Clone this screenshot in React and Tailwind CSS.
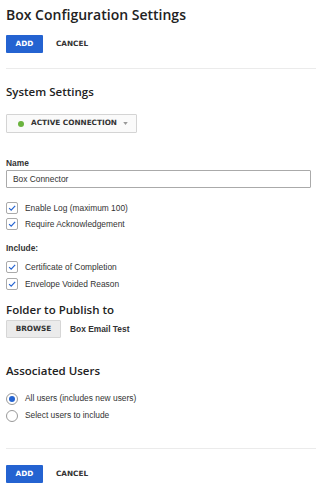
const heading = "font-['Open_Sans',sans-serif] font-semibold text-[#222]";
const body = "font-['Liberation_Sans',Arial,sans-serif] text-[#333]";
const caps = "font-['DejaVu_Sans',sans-serif] text-[7.3px] font-bold whitespace-nowrap";

function Check({ label }) {
  return (
    <label className={`flex h-[16px] items-center gap-[7px] text-[8.4px] ${body}`}>
      <span className="flex h-[12px] w-[12px] items-center justify-center rounded-[2px] border border-[#aaa] bg-white">
        <svg viewBox="0 0 12 12" className="h-[10px] w-[10px]">
          <path d="M2.5 6.2 L5 8.6 L9.8 3.4" fill="none" stroke="#2463d1" strokeWidth="1.4" />
        </svg>
      </span>
      {label}
    </label>
  );
}

function Radio({ label, checked }) {
  return (
    <label className={`flex h-[17px] items-center gap-[7px] text-[8.4px] ${body}`}>
      <span className="flex h-[12px] w-[12px] items-center justify-center rounded-full border border-[#999] bg-white">
        {checked && <span className="h-[6px] w-[6px] rounded-full bg-[#2463d1]" />}
      </span>
      {label}
    </label>
  );
}

function Actions() {
  return (
    <div className={`flex items-center gap-[13px] ${caps}`}>
      <button className="h-[18px] w-[37px] rounded-[1px] bg-[#2463d1] text-white">ADD</button>
      <button className="text-[#333]">CANCEL</button>
    </div>
  );
}

export default function App() {
  return (
    <div className="h-[492px] w-[316px] bg-white pl-[6px]">
      <h1 className={`pt-[5px] text-[14px] leading-[20px] ${heading}`}>Box Configuration Settings</h1>
      <div className="mt-[10px]">
        <Actions />
      </div>
      <div className="mt-[15px] h-px bg-[#ebebeb]" />

      <h2 className={`mt-[14px] text-[11.5px] leading-[18px] ${heading}`}>System Settings</h2>
      <button className={`mt-[13px] flex h-[19px] w-[131px] items-center rounded-[1px] border border-[#d4d4d4] bg-[#fafafa] pl-[11px] text-[#333] ${caps}`}>
        <span className="h-[6px] w-[6px] rounded-full bg-[#6ab33e]" />
        <span className="ml-[7px]">ACTIVE CONNECTION</span>
        <svg viewBox="0 0 6 4" className="ml-[6px] h-[3px] w-[5px]">
          <path d="M0 0 H6 L3 4 Z" fill="#999" />
        </svg>
      </button>

      <div className={`mt-[24px] h-[12px] text-[8.4px] font-bold leading-[12px] ${body}`}>Name</div>
      <div className="mt-[1px] pr-[5px]">
        <div className={`flex h-[18px] items-center rounded-[1px] border border-[#aaa] pl-[6px] text-[8.4px] ${body}`}>
          Box Connector
        </div>
      </div>

      <div className="mt-[12px]">
        <Check label="Enable Log (maximum 100)" />
        <Check label="Require Acknowledgement" />
      </div>

      <div className={`mt-[10px] h-[12px] text-[8.4px] font-bold leading-[12px] ${body}`}>Include:</div>
      <div className="mt-[5px] flex flex-col gap-[1px]">
        <Check label="Certificate of Completion" />
        <Check label="Envelope Voided Reason" />
      </div>

      <h2 className={`mt-[9px] text-[11.5px] leading-[18px] ${heading}`}>Folder to Publish to</h2>
      <div className="mt-[1px] flex items-center gap-[9px]">
        <button className={`h-[18px] w-[55px] rounded-[1px] border border-[#d6d6d6] bg-[#ebebeb] text-[#333] ${caps}`}>
          BROWSE
        </button>
        <span className={`text-[8.4px] font-bold ${body} text-[#222]`}>Box Email Test</span>
      </div>

      <h2 className={`mt-[24px] text-[11.5px] leading-[18px] ${heading}`}>Associated Users</h2>
      <div className="mt-[10px]">
        <Radio label="All users (includes new users)" checked />
        <Radio label="Select users to include" />
      </div>

      <div className="mt-[24px] h-px bg-[#ebebeb]" />
      <div className="mt-[16px]">
        <Actions />
      </div>
    </div>
  );
}
